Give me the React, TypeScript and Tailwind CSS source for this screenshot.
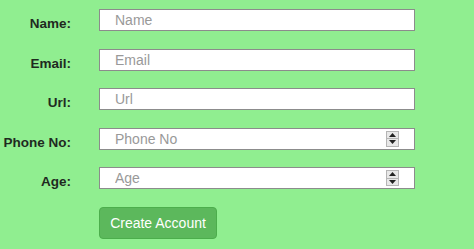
import { useState } from 'react';

// Simple sign-up form on a light green page

const fields = [
  { label: 'Name:', placeholder: 'Name', spinner: false },
  { label: 'Email:', placeholder: 'Email', spinner: false },
  { label: 'Url:', placeholder: 'Url', spinner: false },
  { label: 'Phone No:', placeholder: 'Phone No', spinner: true },
  { label: 'Age:', placeholder: 'Age', spinner: true },
];

function Spinner() {
  return (
    <div className="absolute right-[16px] top-[3px] flex h-[16px] w-[13px] flex-col border border-[#b5b5b5] bg-[#e8e8e8]">
      <div className="flex flex-1 items-center justify-center border-b border-[#b5b5b5]">
        <svg width="7" height="4" viewBox="0 0 7 4"><path d="M0 4 L3.5 0 L7 4 Z" fill="#222" /></svg>
      </div>
      <div className="flex flex-1 items-center justify-center">
        <svg width="7" height="4" viewBox="0 0 7 4"><path d="M0 0 L3.5 4 L7 0 Z" fill="#222" /></svg>
      </div>
    </div>
  );
}

export default function App() {
  const [values, setValues] = useState<string[]>(fields.map(() => ''));

  return (
    <div className="h-[249px] w-[474px] bg-[#90ee90] pt-[9px] font-['Liberation_Sans',Arial,sans-serif]">
      <div className="flex flex-col gap-[17.5px]">
        {fields.map((f, i) => (
          <div key={f.label} className="flex h-[22px] items-start">
            <label className="w-[71px] pt-[7px] text-right text-[13.5px] font-bold leading-[15px] text-[#1f2a1f]">
              {f.label}
            </label>
            <div className="relative ml-[28px] h-[22px] w-[316px]">
              <input
                value={values[i]}
                onChange={(e) => setValues(prev => prev.map((v, j) => j === i ? e.target.value : v))}
                placeholder={f.placeholder}
                className="block h-[22px] w-full border border-[#8c8c8c] bg-white px-[15px] text-[14px] text-[#333] placeholder:text-[#999] focus:outline-none"
              />
              {f.spinner && <Spinner />}
            </div>
          </div>
        ))}
      </div>
      <div className="ml-[99px] mt-[18px]">
        <button className="block h-[32px] w-[118px] rounded-[4px] border border-[#4cae4c] bg-[#5cb85c] text-[14px] text-white">
          Create Account
        </button>
      </div>
    </div>
  );
}
